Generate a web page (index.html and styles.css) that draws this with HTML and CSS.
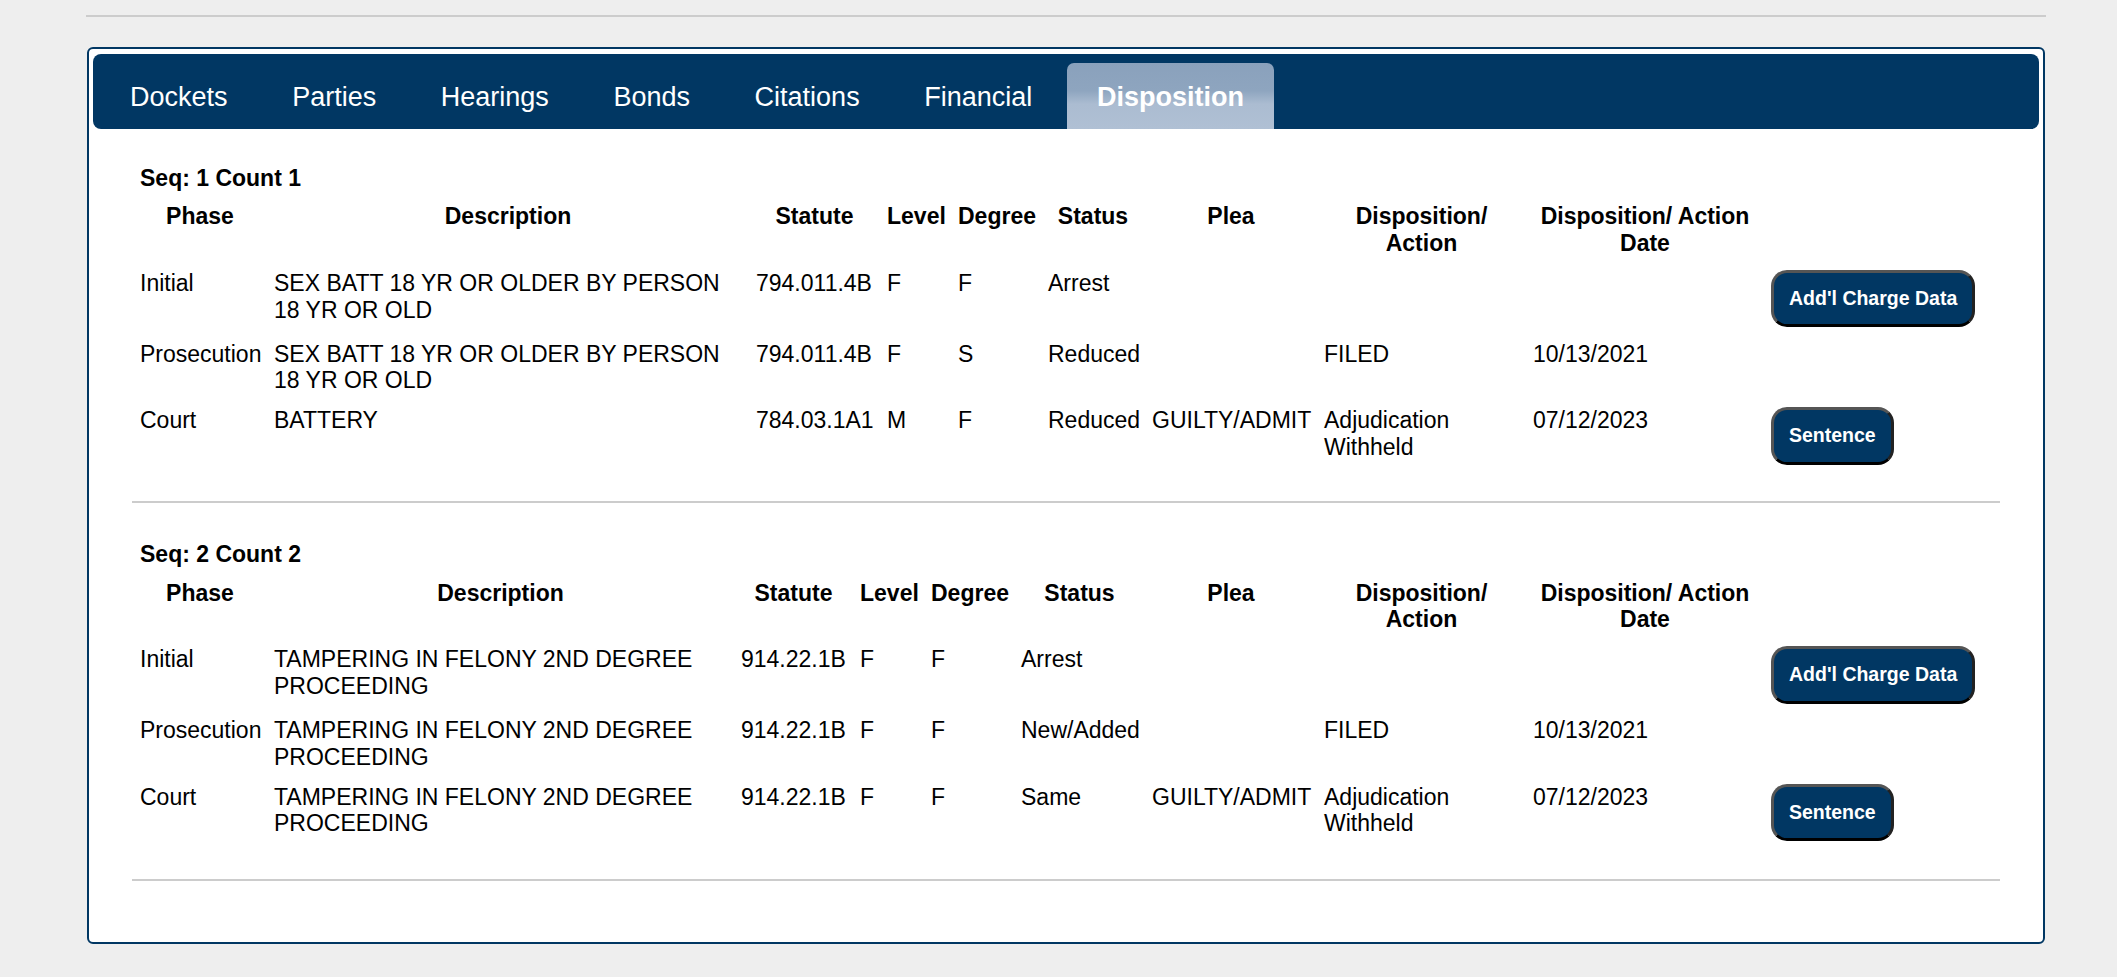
FILE: index.html
```html
<!DOCTYPE html>
<html lang="en">
<head>
    <meta charset="UTF-8">
    <meta name="viewport" content="width=device-width, initial-scale=1.0">
    <title>Case Disposition</title>
    <link rel="stylesheet" href="styles.css">
</head>
<body>
    <div class="page">
        <hr class="top-rule">

        <div class="case-panel">
            <ul class="tab-bar">
                <li class="tab">Dockets</li>
                <li class="tab">Parties</li>
                <li class="tab">Hearings</li>
                <li class="tab">Bonds</li>
                <li class="tab">Citations</li>
                <li class="tab">Financial</li>
                <li class="tab active">Disposition</li>
            </ul>

            <div class="charges">
                <!-- Count 1 -->
                <div class="count">
                    <p class="count-title">Seq: 1 Count 1</p>
                    <table class="charge-table seq-1">
                        <colgroup>
                            <col class="c-phase"><col class="c-desc"><col class="c-statute"><col class="c-level"><col class="c-degree">
                            <col class="c-status"><col class="c-plea"><col class="c-disp"><col class="c-date"><col class="c-action">
                        </colgroup>
                        <tr>
                            <th>Phase</th>
                            <th>Description</th>
                            <th>Statute</th>
                            <th>Level</th>
                            <th>Degree</th>
                            <th>Status</th>
                            <th>Plea</th>
                            <th class="wrap">Disposition/ Action</th>
                            <th class="wrap">Disposition/ Action Date</th>
                            <th></th>
                        </tr>
                        <tr>
                            <td>Initial</td>
                            <td class="wrap">SEX BATT 18 YR OR OLDER BY PERSON 18 YR OR OLD</td>
                            <td>794.011.4B</td>
                            <td>F</td>
                            <td>F</td>
                            <td>Arrest</td>
                            <td></td>
                            <td class="wrap"></td>
                            <td></td>
                            <td><button class="charge-btn">Add'l Charge Data</button></td>
                        </tr>
                        <tr>
                            <td>Prosecution</td>
                            <td class="wrap">SEX BATT 18 YR OR OLDER BY PERSON 18 YR OR OLD</td>
                            <td>794.011.4B</td>
                            <td>F</td>
                            <td>S</td>
                            <td>Reduced</td>
                            <td></td>
                            <td class="wrap">FILED</td>
                            <td>10/13/2021</td>
                            <td></td>
                        </tr>
                        <tr>
                            <td>Court</td>
                            <td class="wrap">BATTERY</td>
                            <td>784.03.1A1</td>
                            <td>M</td>
                            <td>F</td>
                            <td>Reduced</td>
                            <td>GUILTY/ADMIT</td>
                            <td class="wrap">Adjudication Withheld</td>
                            <td>07/12/2023</td>
                            <td><button class="charge-btn">Sentence</button></td>
                        </tr>
                    </table>
                    <hr class="count-rule">
                </div>

                <!-- Count 2 -->
                <div class="count">
                    <p class="count-title">Seq: 2 Count 2</p>
                    <table class="charge-table seq-2">
                        <colgroup>
                            <col class="c-phase"><col class="c-desc"><col class="c-statute"><col class="c-level"><col class="c-degree">
                            <col class="c-status"><col class="c-plea"><col class="c-disp"><col class="c-date"><col class="c-action">
                        </colgroup>
                        <tr>
                            <th>Phase</th>
                            <th>Description</th>
                            <th>Statute</th>
                            <th>Level</th>
                            <th>Degree</th>
                            <th>Status</th>
                            <th>Plea</th>
                            <th class="wrap">Disposition/ Action</th>
                            <th class="wrap">Disposition/ Action Date</th>
                            <th></th>
                        </tr>
                        <tr>
                            <td>Initial</td>
                            <td class="wrap">TAMPERING IN FELONY 2ND DEGREE PROCEEDING</td>
                            <td>914.22.1B</td>
                            <td>F</td>
                            <td>F</td>
                            <td>Arrest</td>
                            <td></td>
                            <td class="wrap"></td>
                            <td></td>
                            <td><button class="charge-btn">Add'l Charge Data</button></td>
                        </tr>
                        <tr>
                            <td>Prosecution</td>
                            <td class="wrap">TAMPERING IN FELONY 2ND DEGREE PROCEEDING</td>
                            <td>914.22.1B</td>
                            <td>F</td>
                            <td>F</td>
                            <td>New/Added</td>
                            <td></td>
                            <td class="wrap">FILED</td>
                            <td>10/13/2021</td>
                            <td></td>
                        </tr>
                        <tr>
                            <td>Court</td>
                            <td class="wrap">TAMPERING IN FELONY 2ND DEGREE PROCEEDING</td>
                            <td>914.22.1B</td>
                            <td>F</td>
                            <td>F</td>
                            <td>Same</td>
                            <td>GUILTY/ADMIT</td>
                            <td class="wrap">Adjudication Withheld</td>
                            <td>07/12/2023</td>
                            <td><button class="charge-btn">Sentence</button></td>
                        </tr>
                    </table>
                    <hr class="count-rule last">
                </div>
            </div>
        </div>
    </div>
</body>
</html>
```

FILE: styles.css
```css
body {
    margin: 0;
    background-color: #eeeeee;
    font-family: "Liberation Sans", Arial, sans-serif;
    color: #000;
}

.page {
    width: 1960px;
    margin-left: 86px;
    padding-top: 15px;
}

.top-rule {
    margin: 0 0 30px;
    border: 0;
    border-top: 2px solid #cccccc;
}

.case-panel {
    margin: 0 1px;
    background-color: #fff;
    border: 2px solid #013763;
    border-radius: 6px;
    padding: 5px 4px 0;
}

/* tabs */
.tab-bar {
    display: flex;
    gap: 4.6px;
    list-style: none;
    margin: 0;
    padding: 9px 7px 0;
    height: 75px;
    box-sizing: border-box;
    background-color: #013763;
    border-radius: 8px;
}

.tab {
    padding: 19px 30px 16px;
    font-size: 27px;
    line-height: 31px;
    color: #fff;
    cursor: pointer;
}

.tab.active {
    font-weight: bold;
    border-radius: 7px 7px 0 0;
    background: linear-gradient(#8aa1bc 0%, #8ea5bf 42%, #abbcd1 62%, #b0c0d4 100%);
}

/* charges */
.charges {
    padding: 36px 39px 61px;
}

.count-title {
    margin: 0 0 5px;
    padding-left: 8px;
    font-size: 23px;
    line-height: 26.67px;
    font-weight: bold;
}

.charge-table {
    width: 100%;
    table-layout: fixed;
    border-collapse: collapse;
    font-size: 23px;
    line-height: 26.67px;
}

.charge-table th,
.charge-table td {
    padding: 6.67px 7px;
    vertical-align: top;
    white-space: nowrap;
    text-align: left;
}

.charge-table th {
    text-align: center;
}

.charge-table th:first-child,
.charge-table td:first-child {
    padding-left: 8px;
}

.charge-table .wrap {
    white-space: normal;
}

.seq-1 .c-phase { width: 135px; }
.seq-1 .c-desc { width: 482px; }
.seq-1 .c-statute { width: 131px; }
.seq-1 .c-level { width: 71px; }
.seq-1 .c-degree { width: 90px; }
.seq-1 .c-status { width: 104px; }
.seq-1 .c-plea { width: 172px; }
.seq-1 .c-disp { width: 209px; }
.seq-1 .c-date { width: 238px; }
.seq-1 .c-action { width: 236px; }

.seq-2 .c-phase { width: 135px; }
.seq-2 .c-desc { width: 467px; }
.seq-2 .c-statute { width: 119px; }
.seq-2 .c-level { width: 71px; }
.seq-2 .c-degree { width: 90px; }
.seq-2 .c-status { width: 131px; }
.seq-2 .c-plea { width: 172px; }
.seq-2 .c-disp { width: 209px; }
.seq-2 .c-date { width: 238px; }
.seq-2 .c-action { width: 236px; }

.charge-btn {
    display: inline-block;
    vertical-align: top;
    margin: 0;
    padding: 14px 15px;
    font-family: inherit;
    font-size: 19.5px;
    line-height: 23.33px;
    font-weight: bold;
    color: #fff;
    background-color: #013763;
    border: 3px solid #555;
    border-right-color: #222;
    border-bottom-color: #000;
    border-radius: 16px;
    cursor: pointer;
}

.count-rule {
    margin: 30px 0 38px;
    border: 0;
    border-top: 2px solid #cccccc;
}

.count-rule.last {
    margin: 31.5px 0 0;
}
```
